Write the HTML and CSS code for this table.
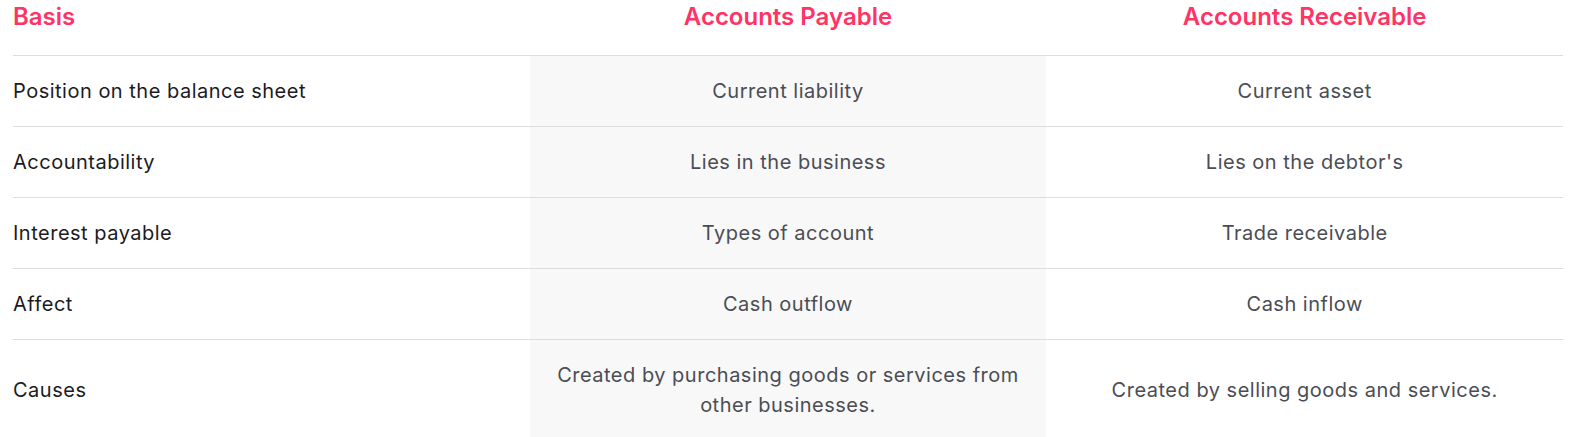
FILE: index.html
```html
<!DOCTYPE html>
<html lang="en">
<head>
<meta charset="utf-8">
<title>Accounts Payable vs Accounts Receivable</title>
<link rel="stylesheet" href="styles.css">
</head>
<body>
<div class="wrap">
  <table class="compare">
    <thead>
      <tr>
        <th class="basis">Basis</th>
        <th>Accounts Payable</th>
        <th>Accounts Receivable</th>
      </tr>
    </thead>
    <tbody>
      <tr>
        <td class="basis">Position on the balance sheet</td>
        <td class="mid">Current liability</td>
        <td>Current asset</td>
      </tr>
      <tr>
        <td class="basis">Accountability</td>
        <td class="mid">Lies in the business</td>
        <td>Lies on the debtor's</td>
      </tr>
      <tr>
        <td class="basis">Interest payable</td>
        <td class="mid">Types of account</td>
        <td>Trade receivable</td>
      </tr>
      <tr>
        <td class="basis">Affect</td>
        <td class="mid">Cash outflow</td>
        <td>Cash inflow</td>
      </tr>
      <tr>
        <td class="basis">Causes</td>
        <td class="mid">Created by purchasing goods or services from other businesses.</td>
        <td>Created by selling goods and services.</td>
      </tr>
    </tbody>
  </table>
</div>
</body>
</html>
```

FILE: styles.css
```css
html, body {
  margin: 0;
  padding: 0;
  background: #ffffff;
}

.wrap {
  padding: 0 10px 0 13px;
}

.compare {
  width: 100%;
  border-collapse: collapse;
  table-layout: fixed;
  font-family: Inter, "Open Sans", sans-serif;
}

.compare th {
  font-size: 24px;
  font-weight: 600;
  line-height: 34px;
  color: #ff3465;
  text-align: center;
  padding: 0 0 21px;
  border-bottom: 1px solid #dddddd;
}

.compare td {
  font-size: 20px;
  font-weight: 400;
  line-height: 30px;
  letter-spacing: 0.5px;
  color: #4a4d55;
  text-align: center;
  padding: 20px 10px;
  border-bottom: 1px solid #dddddd;
}

.compare th.basis {
  text-align: left;
  padding-left: 0;
}

.compare td.basis {
  text-align: left;
  padding-left: 0;
  color: #1b1b1f;
}

.compare td.mid {
  background: #f8f8f8;
}
```
